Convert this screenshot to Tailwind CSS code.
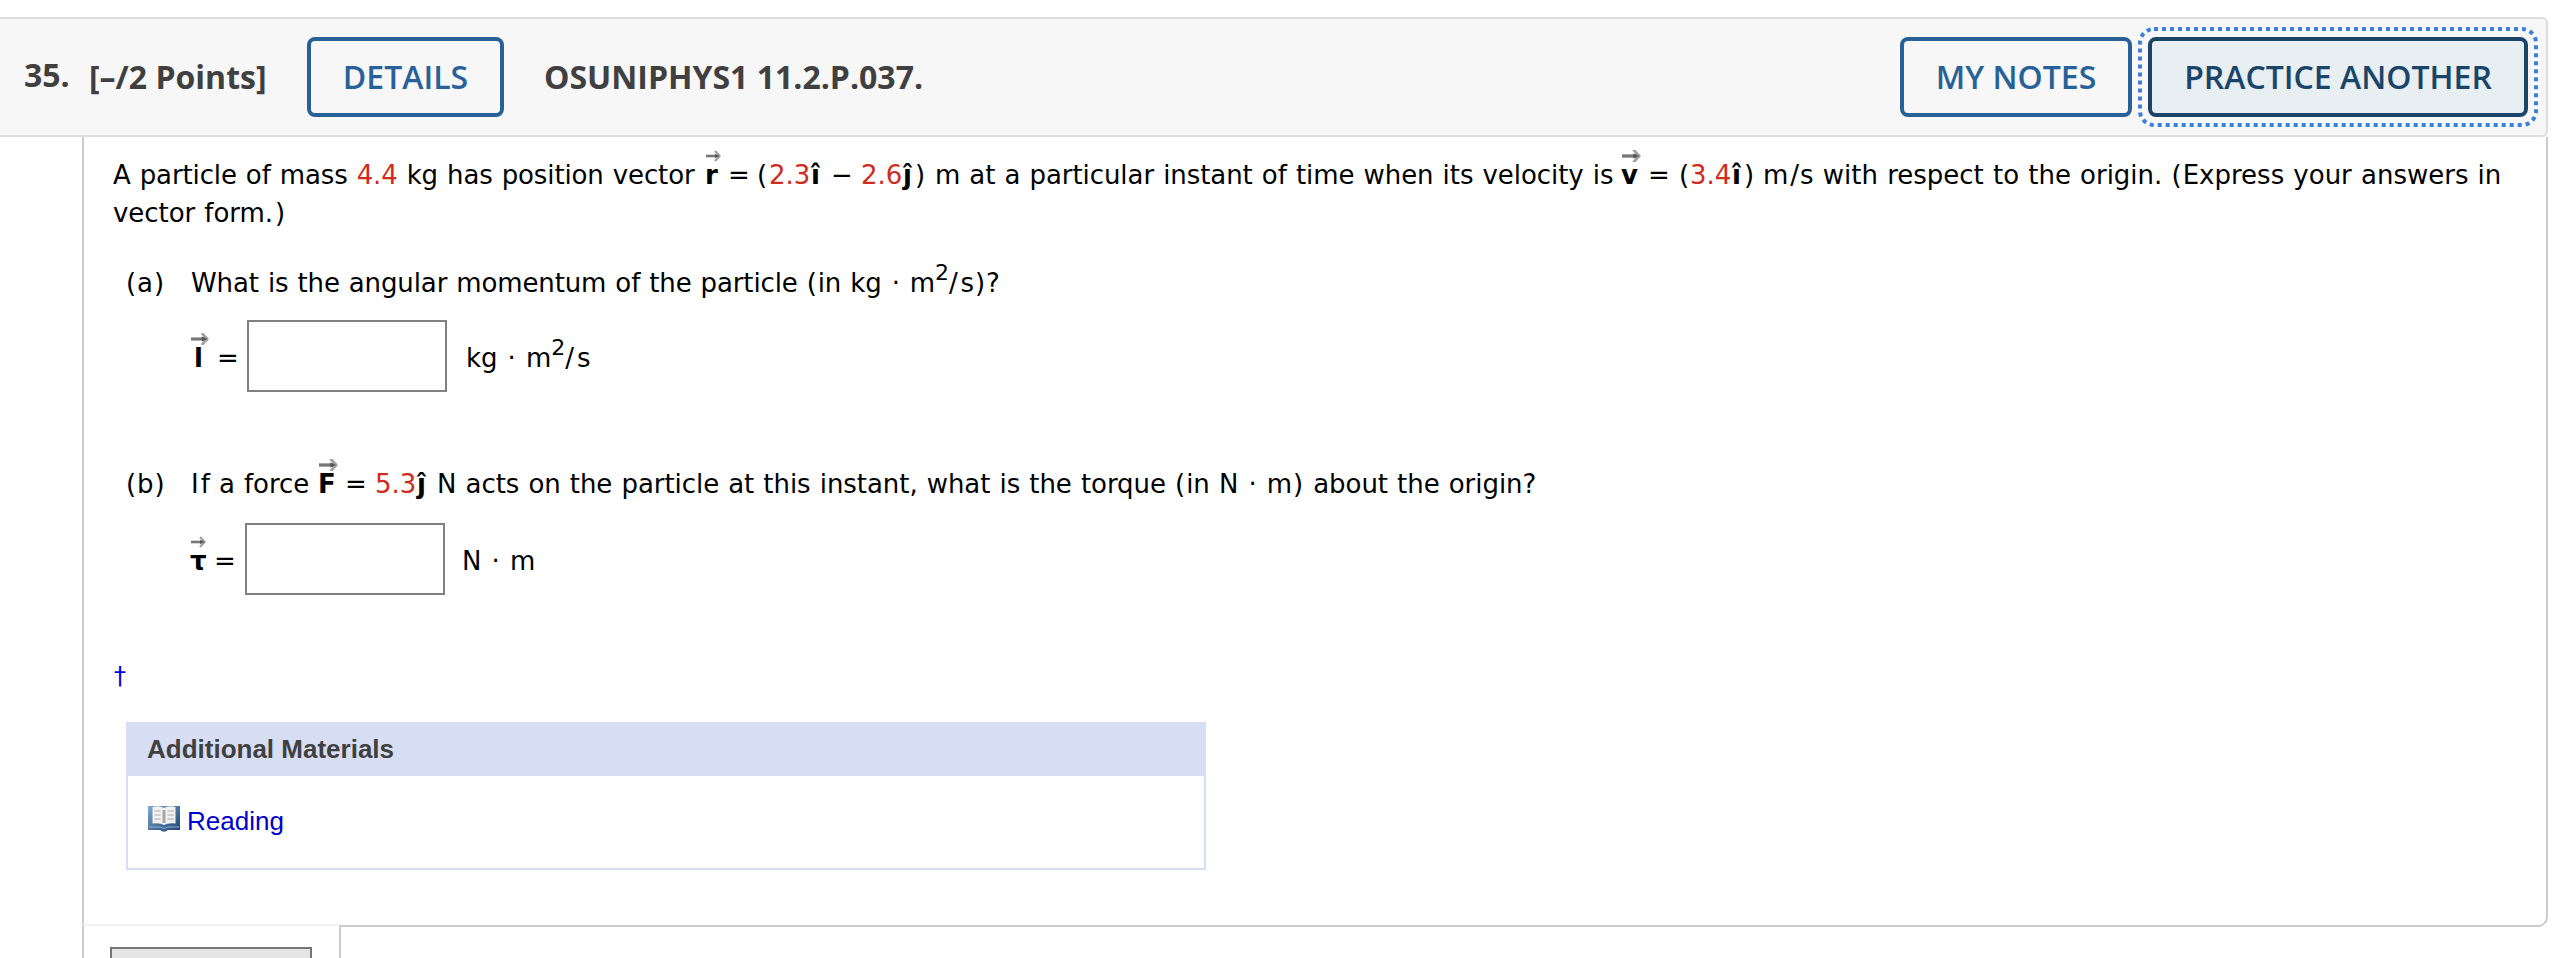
<!DOCTYPE html>
<html lang="en">
<head>
    <meta charset="UTF-8">
    <meta name="viewport" content="width=device-width, initial-scale=1.0">
    <title>OSUNIPHYS1 11.2.P.037</title>
    <script src="https://cdn.jsdelivr.net/npm/@tailwindcss/browser@4"></script>
</head>
<body class="bg-white text-black h-[958px] overflow-hidden pt-[17px]">

    <!-- Arrow drawn above the vector letters -->
    <svg class="hidden">
        <symbol id="arrow" viewBox="0 0 15 12" preserveAspectRatio="xMaxYMid slice">
            <path d="M-6 6H14" stroke="#777" stroke-width="2.6" fill="none"/>
            <path d="M9 1L13.500 6L9 11" stroke="#a0a0a0" stroke-width="2.2" fill="none"/>
            <path d="M9 4L13.500 6L9 8Z" fill="#555"/>
        </symbol>
    </svg>

    <!-- Question header -->
    <header class="w-[2548px] h-[120px] flex items-center bg-[#f7f7f7] border-y-2 border-r-2 border-[#dddddd] rounded-r-[6px] pl-6 pr-[18px] font-['Open_Sans',sans-serif] text-[32px] leading-[44px] text-[#404040] font-bold whitespace-nowrap">
        <span class="w-[65px] pb-1">35.</span>
        <span class="w-[218px]">[–/2 Points]</span>
        <button class="w-[197px] h-20 border-4 border-[#286197] rounded-lg text-[#286197] font-semibold">DETAILS</button>
        <span class="ml-10">OSUNIPHYS1 11.2.P.037.</span>
        <button class="ml-auto w-[232px] h-20 border-4 border-[#286197] rounded-lg text-[#286197] font-semibold">MY NOTES</button>
        <button class="relative ml-4 w-[380px] h-20 border-4 border-[#1a4468] rounded-lg bg-[#e7eff3] text-[#1a4468] font-semibold">
            PRACTICE ANOTHER
            <!-- focus ring -->
            <svg class="absolute -left-[14px] -top-[14px] w-[400px] h-[100px]" viewBox="0 0 400 100">
                <rect x="2" y="2" width="396" height="96" rx="14" fill="none" stroke="#3b7fdd" stroke-width="4" stroke-dasharray="4 4"/>
            </svg>
        </button>
    </header>

    <!-- Question content -->
    <main class="ml-[82px] w-[2466px] h-[790px] border-x-2 border-b-2 border-[#cccccc] rounded-br-[10px] pt-[19px] pl-[29px] font-['DejaVu_Sans',sans-serif] text-[26px] leading-[38px] tracking-[-0.04px] [word-spacing:0.9px] whitespace-nowrap">
        <div class="flex h-[38px]">
            <span class="w-[592px] tracking-[-0.12px]">A particle of mass <span class="text-[#d02b20]">4.4</span> kg has position vector</span>
            <b class="relative w-[23px]">r<svg class="absolute left-px top-[-6px] w-[15px] h-3"><use href="#arrow"/></svg></b>
            <span class="w-[29px]">=</span>
            <span class="w-[12px]">(</span>
            <span class="w-[42px] text-[#d02b20]">2.3</span>
            <b class="w-[20px]">î</b>
            <span class="w-[30px]">−</span>
            <span class="w-[42px] text-[#d02b20]">2.6</span>
            <b class="w-[12px]">ĵ</b>
            <span class="w-[20px]">)</span>
            <span class="w-[686px] tracking-[-0.06px]">m at a particular instant of time when its velocity is</span>
            <b class="relative w-[27px]">v<svg class="absolute left-px top-[-6px] w-[19px] h-3"><use href="#arrow"/></svg></b>
            <span class="w-[31px]">=</span>
            <span class="w-[11px]">(</span>
            <span class="w-[42px] text-[#d02b20]">3.4</span>
            <b class="w-[12px]">î</b>
            <span class="w-[19px]">)</span>
            <span class="tracking-[0px]">m<span class="pl-[2px] pr-px">/</span>s with respect to the origin. <span class="pr-px">(</span>Express your answers in</span>
        </div>
        <p class="h-[38px]">vector form.<span class="pl-[2px]">)</span></p>

        <section class="mt-8 ml-[13px] h-[201px]">
            <div class="flex h-[38px]">
                <span class="w-[65px]">(<span class="px-px">a</span>)</span>
                <p class="tracking-[-0.12px]">What is the angular momentum of the particle (<span class="pl-px">in</span> kg <span class="px-px">·</span> m<span class="relative -top-3 text-[22px] leading-none">2</span><span class="pr-[3px]">/</span>s<span class="pl-px">)</span><span class="pl-px">?</span></p>
            </div>
            <div class="flex items-center mt-[18px] ml-[65px] h-[72px]">
                <b class="relative w-[26px] h-[38px] mt-[4px] pl-[3px]">l<svg class="absolute left-0 top-[-6px] w-[18px] h-3"><use href="#arrow"/></svg></b>
                <span class="w-[30px] h-[38px] mt-[4px]">=</span>
                <input type="text" class="w-[200px] h-[72px] border-2 border-[#808080] bg-white">
                <span class="ml-[19px] h-[38px] mt-[4px]">kg <span class="px-px">·</span> m<span class="relative -top-3 text-[22px] leading-none">2</span><span class="pr-[3px]">/</span>s</span>
            </div>
        </section>

        <section class="ml-[13px] h-[192px]">
            <div class="flex h-[38px]">
                <span class="w-[65px]">(<span class="px-px">b</span>)</span>
                <span class="w-[127px]"><span class="pr-[2px]">I</span>f a force</span>
                <b class="relative w-[27px]">F<svg class="absolute left-px top-[-6px] w-[19px] h-3"><use href="#arrow"/></svg></b>
                <span class="w-[30px]">=</span>
                <span class="w-[42px] text-[#d02b20]">5.3</span>
                <b class="w-[20px]">ĵ</b>
                <p class="tracking-[-0.05px]">N acts on the particle at this instant, what is the torque (<span class="pl-px">in</span> N <span class="px-px">·</span> m<span class="px-px">)</span> about the origin?</p>
            </div>
            <div class="flex items-center mt-5 ml-[65px] h-[72px]">
                <b class="relative -ml-px w-[24px] h-[38px] mt-[4px]">τ<svg class="absolute left-px top-[-6px] w-[15px] h-3"><use href="#arrow"/></svg></b>
                <span class="w-[31px] h-[38px] mt-[4px]">=</span>
                <input type="text" class="w-[200px] h-[72px] border-2 border-[#808080] bg-white">
                <span class="ml-[17px] h-[38px] mt-[4px]">N <span class="px-px">·</span> m</span>
            </div>
        </section>

        <a href="#" class="block h-[65px] pl-px text-[#0000ee] text-[24px]">†</a>

        <!-- Additional materials box -->
        <div class="ml-[13px] w-[1080px] h-[148px] border-2 border-[#d7ddf3] font-['Liberation_Sans',Arial,sans-serif] tracking-normal [word-spacing:0px]">
            <h3 class="h-[52px] pl-[19px] bg-[#d7ddf3] text-[#404040] font-bold leading-[50px]">Additional Materials</h3>
            <a href="#" class="flex pl-5 pt-[26px] text-[#0000cc] leading-[38px]">
                <svg class="w-8 h-7 mt-[2px] mr-[7px]" viewBox="0 0 32 28">
                    <defs>
                        <linearGradient id="cover" x1="0" y1="0" x2="1" y2="1">
                            <stop offset="0" stop-color="#7fa9cf"/>
                            <stop offset="1" stop-color="#1c4273"/>
                        </linearGradient>
                    </defs>
                    <path d="M0 2H32V26H20Q16 29.500 12 26H0Z" fill="url(#cover)"/>
                    <path d="M1 23H12Q16 26 20 23H31" stroke="#8fb0d0" stroke-width="1" fill="none"/>
                    <path d="M4.500 3Q11 1 16 4Q21 1 27.500 3V19.500Q20 18.500 16 21Q12 18.500 4.500 19.500Z" fill="#f1f1f1"/>
                    <path d="M14.500 6H17.500V19H14.500Z" fill="#a8a8a8"/>
                    <path d="M6.500 7H12.500M6.500 11H12.500M6.500 15H12.500M19.500 7H26M19.500 11H26M19.500 15H26" stroke="#c4c4c4" stroke-width="1.500"/>
                </svg>
                <span>Reading</span>
            </a>
        </div>
    </main>

    <!-- Submit area under the question -->
    <footer class="-mt-[3px] ml-[82px] w-[259px] h-[34px] relative bg-white border-x-2 border-t-2 border-[#cccccc] border-t-[#f2f2f2] pl-[26px] pt-[21px]">
        <button class="block w-[202px] h-[11px] border-2 border-b-0 border-[#757575] bg-[#e5e5e5]"></button>
    </footer>

</body>
</html>
